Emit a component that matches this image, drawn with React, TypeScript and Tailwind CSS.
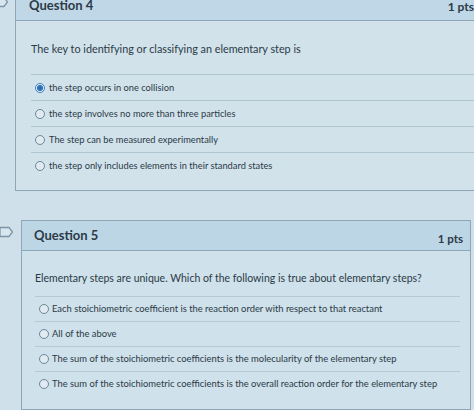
import React from "react";

type Option = { text: string; selected?: boolean };

const q4Options: Option[] = [
  { text: "the step occurs in one collision", selected: true },
  { text: "the step involves no more than three particles" },
  { text: "The step can be measured experimentally" },
  { text: "the step only includes elements in their standard states" },
];

const q5Options: Option[] = [
  { text: "Each stoichiometric coefficient is the reaction order with respect to that reactant" },
  { text: "All of the above" },
  { text: "The sum of the stoichiometric coefficients is the molecularity of the elementary step" },
  { text: "The sum of the stoichiometric coefficients is the overall reaction order for the elementary step" },
];

const Radio = ({ selected }: { selected?: boolean }) =>
  selected ? (
    <span className="w-[10px] h-[10px] rounded-full border border-[#3b7fc4] bg-[#e8f1f8] flex items-center justify-center shrink-0">
      <span className="w-[6px] h-[6px] rounded-full bg-[#2f6fb5]" />
    </span>
  ) : (
    <span className="w-[10px] h-[10px] rounded-full border border-[#6f8797] bg-[#dfeaf1] shrink-0" />
  );

const FlagIcon = () => (
  <svg width="15" height="12" viewBox="0 0 15 12" className="shrink-0">
    <path d="M1 1.5 H10 L13.5 6 L10 10.5 H1 Z" fill="#d9e6ee" stroke="#7d95a5" strokeWidth="1.3" />
  </svg>
);

const App = (): JSX.Element => {
  return (
    <div className="w-[474px] h-[410px] overflow-hidden bg-[#cfe0ea] font-['Lato','Noto_Sans',sans-serif] text-[#2b3a46]">
      {/* Question 4 */}
      <div className="flex mt-[-9px]">
        <div className="w-[21px] shrink-0 pt-[5px] ml-[-6px]">
          <FlagIcon />
        </div>
        <div className="w-[463px] shrink-0 border-l border-b border-[#8ea7b7] bg-[#d1e2eb]">
          <div className="h-[30px] bg-[#c0d7e7] border-b border-[#8ea7b7] flex items-center justify-between pl-[13px] pr-[4px]">
            <span className="text-[13px] font-bold">Question 4</span>
            <span className="text-[12px] font-bold mt-[3px]">1 pts</span>
          </div>
          <div className="pl-[15px] pr-[2px] pt-[20px] pb-[12px]">
            <p className="text-[10.8px] leading-[16px]">The key to identifying or classifying an elementary step is</p>
            <div className="mt-[17px]">
              {q4Options.map((o) => (
                <div key={o.text} className="h-[26px] border-t border-[#b0c5d2] flex items-center gap-[4px] pl-[4px]">
                  <Radio selected={o.selected} />
                  <span className="text-[9.3px] leading-none whitespace-nowrap">{o.text}</span>
                </div>
              ))}
            </div>
          </div>
        </div>
      </div>

      {/* Question 5 */}
      <div className="flex mt-[29px]">
        <div className="w-[22px] shrink-0 pt-[6px] ml-[-1px]">
          <FlagIcon />
        </div>
        <div className="w-[450px] shrink-0 border border-[#8ea7b7] bg-[#cfe1ea]">
          <div className="h-[30px] bg-[#bdd6e6] border-b border-[#8ea7b7] flex items-center justify-between pl-[12px] pr-[7px]">
            <span className="text-[13px] font-bold">Question 5</span>
            <span className="text-[11.5px] font-bold mt-[6px]">1 pts</span>
          </div>
          <div className="pl-[13px] pr-[10px] pt-[19px] pb-[13px]">
            <p className="text-[10.5px] leading-[16px]">
              Elementary steps are unique. Which of the following is true about elementary steps?
            </p>
            <div className="mt-[10px]">
              {q5Options.map((o) => (
                <div key={o.text} className="h-[25px] border-t border-[#b6cad6] flex items-center gap-[3px] pl-[4px]">
                  <Radio selected={o.selected} />
                  <span className="text-[9.4px] leading-none whitespace-nowrap">{o.text}</span>
                </div>
              ))}
            </div>
          </div>
        </div>
      </div>
    </div>
  );
};

export default App;
